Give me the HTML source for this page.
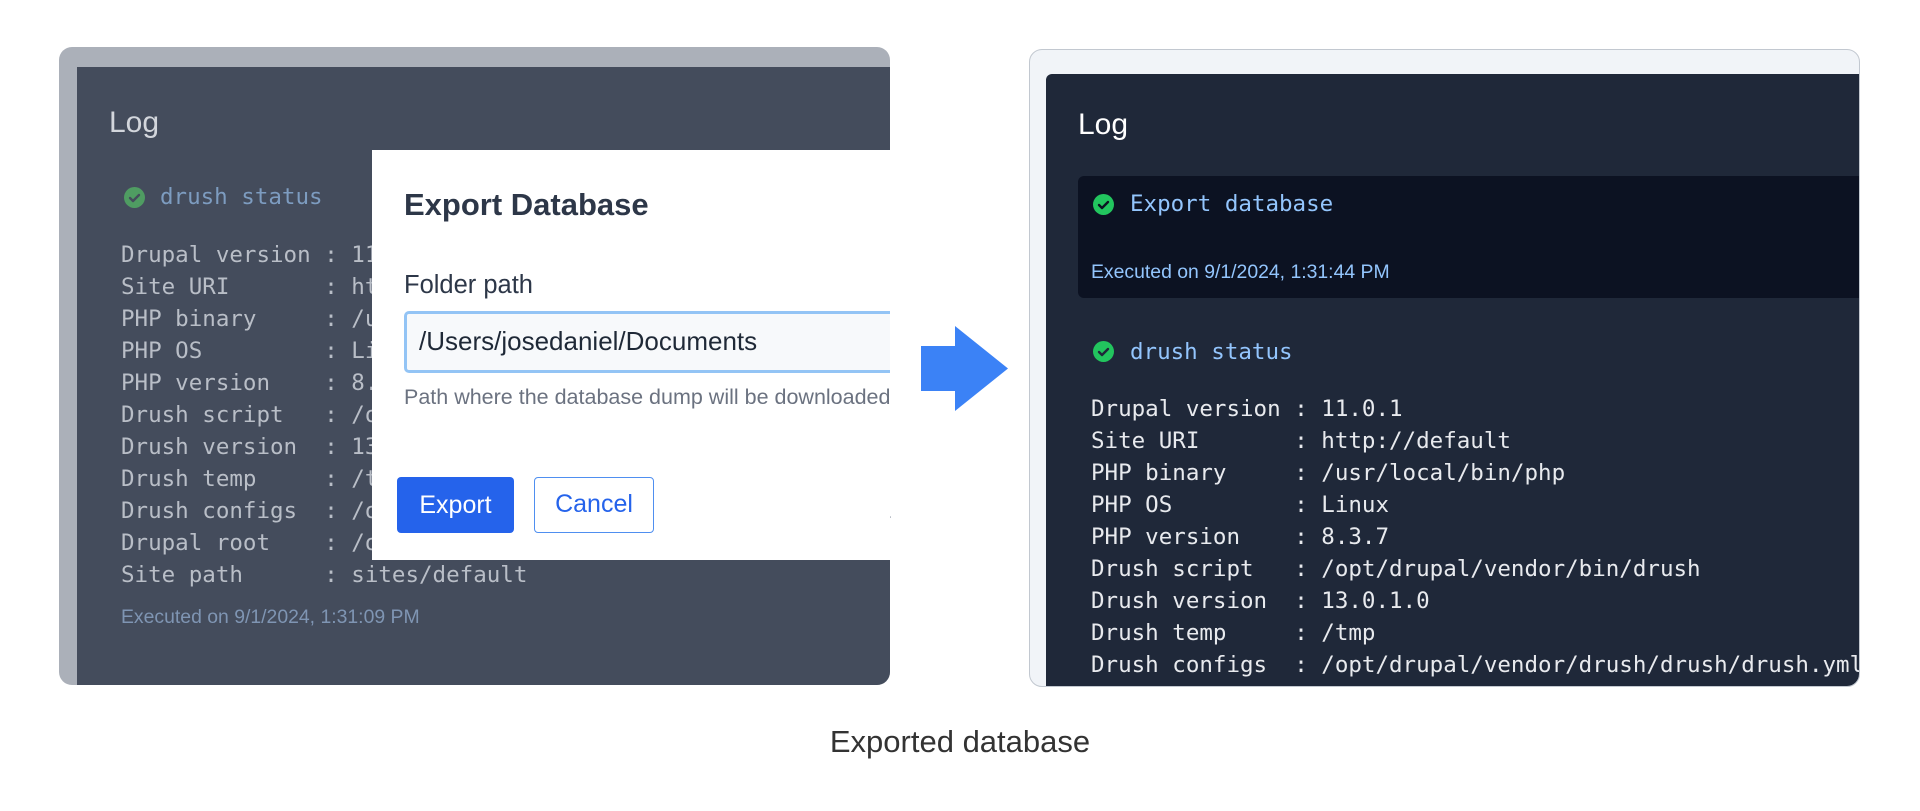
<!DOCTYPE html>
<html><head><meta charset="utf-8"><style>
*{margin:0;padding:0;box-sizing:border-box}
body{width:1920px;height:811px;background:#fff;position:relative;overflow:hidden;font-family:"Liberation Sans",sans-serif}
.abs{position:absolute}
.mono{font-family:"DejaVu Sans Mono","Liberation Mono",monospace;font-size:22.5px;white-space:pre;line-height:32px}
</style></head><body>
<!-- left panel -->
<div class="abs" style="left:59px;top:47px;width:831px;height:638px;background:#abb0b9;border-radius:13px;overflow:hidden">
 <div class="abs" style="left:18px;top:20px;width:820px;height:640px;background:#444c5c"></div>
</div>
<div class="abs" style="left:109px;top:106px;font-size:30px;color:#d3d6dc">Log</div>
<svg class="abs" style="left:124px;top:187px" width="21" height="21" viewBox="0 0 21 21"><circle cx="10.5" cy="10.5" r="10.5" fill="#4f9c62"/><path d="M6 11l3 3 6-6" stroke="#444c5c" stroke-width="2.4" fill="none" stroke-linecap="round" stroke-linejoin="round"/></svg>
<div class="abs mono" style="left:160px;top:181px;color:#7d9cc0">drush status</div>
<div class="abs mono" style="left:121px;top:239px;color:#b9bec7">Drupal version : 11.0.1
Site URI       : http://default
PHP binary     : /usr/local/bin/php
PHP OS         : Linux
PHP version    : 8.3.7
Drush script   : /opt/drupal/vendor/bin/drush
Drush version  : 13.0.1.0
Drush temp     : /tmp
Drush configs  : /opt/drupal/vendor/drush/drush/drush.yml
Drupal root    : /opt/drupal/web
Site path      : sites/default</div>
<div class="abs" style="left:121px;top:606px;font-size:19.4px;color:#7f95b3">Executed on 9/1/2024, 1:31:09 PM</div>
<!-- modal -->
<div class="abs" style="left:372px;top:150px;width:518px;height:410px;background:#fff;overflow:hidden">
 <div class="abs" style="left:32px;top:37px;font-size:31px;font-weight:bold;color:#2d3748;white-space:nowrap">Export Database</div>
 <div class="abs" style="left:32px;top:121px;font-size:25.5px;color:#2d3748;white-space:nowrap">Folder path</div>
 <div class="abs" style="left:32px;top:161px;width:520px;height:62px;border:3px solid #93c4f5;border-radius:5px;background:#f7f9fb"></div>
 <div class="abs" style="left:47px;top:176px;font-size:26px;color:#1f2937;white-space:nowrap">/Users/josedaniel/Documents</div>
 <div class="abs" style="left:32px;top:235px;font-size:21.5px;color:#6b7280;white-space:nowrap">Path where the database dump will be downloaded</div>
 <div class="abs" style="left:25px;top:327px;width:117px;height:56px;background:#2563eb;border-radius:4px;color:#fff;font-size:25px;text-align:center;line-height:56px">Export</div>
 <div class="abs" style="left:162px;top:327px;width:120px;height:56px;border:1.5px solid #4f8ff0;border-radius:4px;color:#2563eb;font-size:25px;text-align:center;line-height:53px">Cancel</div>
</div>
<!-- arrow -->
<svg class="abs" style="left:921px;top:326px" width="88" height="85" viewBox="0 0 88 85"><path d="M0 20H34V0L87 42.5 34 85V65H0Z" fill="#3b82f6"/></svg>
<!-- right panel -->
<div class="abs" style="left:1029px;top:49px;width:831px;height:638px;background:#f1f4f8;border:1.5px solid #c2c8d0;border-radius:13px;overflow:hidden">
 <div class="abs" style="left:16px;top:24px;width:830px;height:640px;background:#1f2839;border-radius:6px 0 0 0"></div>
 <div class="abs" style="left:48px;top:126px;width:800px;height:122px;background:#0c1222;border-radius:6px"></div>
</div>
<div class="abs" style="left:1078px;top:108px;font-size:30px;color:#fff">Log</div>
<svg class="abs" style="left:1093px;top:194px" width="21" height="21" viewBox="0 0 21 21"><circle cx="10.5" cy="10.5" r="10.5" fill="#22c55e"/><path d="M6 11l3 3 6-6" stroke="#0c1222" stroke-width="2.4" fill="none" stroke-linecap="round" stroke-linejoin="round"/></svg>
<div class="abs mono" style="left:1130px;top:188px;color:#93c5fd">Export database</div>
<div class="abs" style="left:1091px;top:261px;font-size:19.4px;color:#93c5fd">Executed on 9/1/2024, 1:31:44 PM</div>
<svg class="abs" style="left:1093px;top:341px" width="21" height="21" viewBox="0 0 21 21"><circle cx="10.5" cy="10.5" r="10.5" fill="#22c55e"/><path d="M6 11l3 3 6-6" stroke="#1f2839" stroke-width="2.4" fill="none" stroke-linecap="round" stroke-linejoin="round"/></svg>
<div class="abs mono" style="left:1130px;top:336px;color:#93c5fd">drush status</div>
<div class="abs" style="left:1046px;top:393px;width:813px;height:293px;overflow:hidden">
<div class="abs mono" style="left:45px;top:0;color:#e8eaee">Drupal version : 11.0.1
Site URI       : http://default
PHP binary     : /usr/local/bin/php
PHP OS         : Linux
PHP version    : 8.3.7
Drush script   : /opt/drupal/vendor/bin/drush
Drush version  : 13.0.1.0
Drush temp     : /tmp
Drush configs  : /opt/drupal/vendor/drush/drush/drush.yml</div>
</div>
<div class="abs" style="left:0;width:1920px;top:724px;text-align:center;font-size:31px;color:#333">Exported database</div>
</body></html>
